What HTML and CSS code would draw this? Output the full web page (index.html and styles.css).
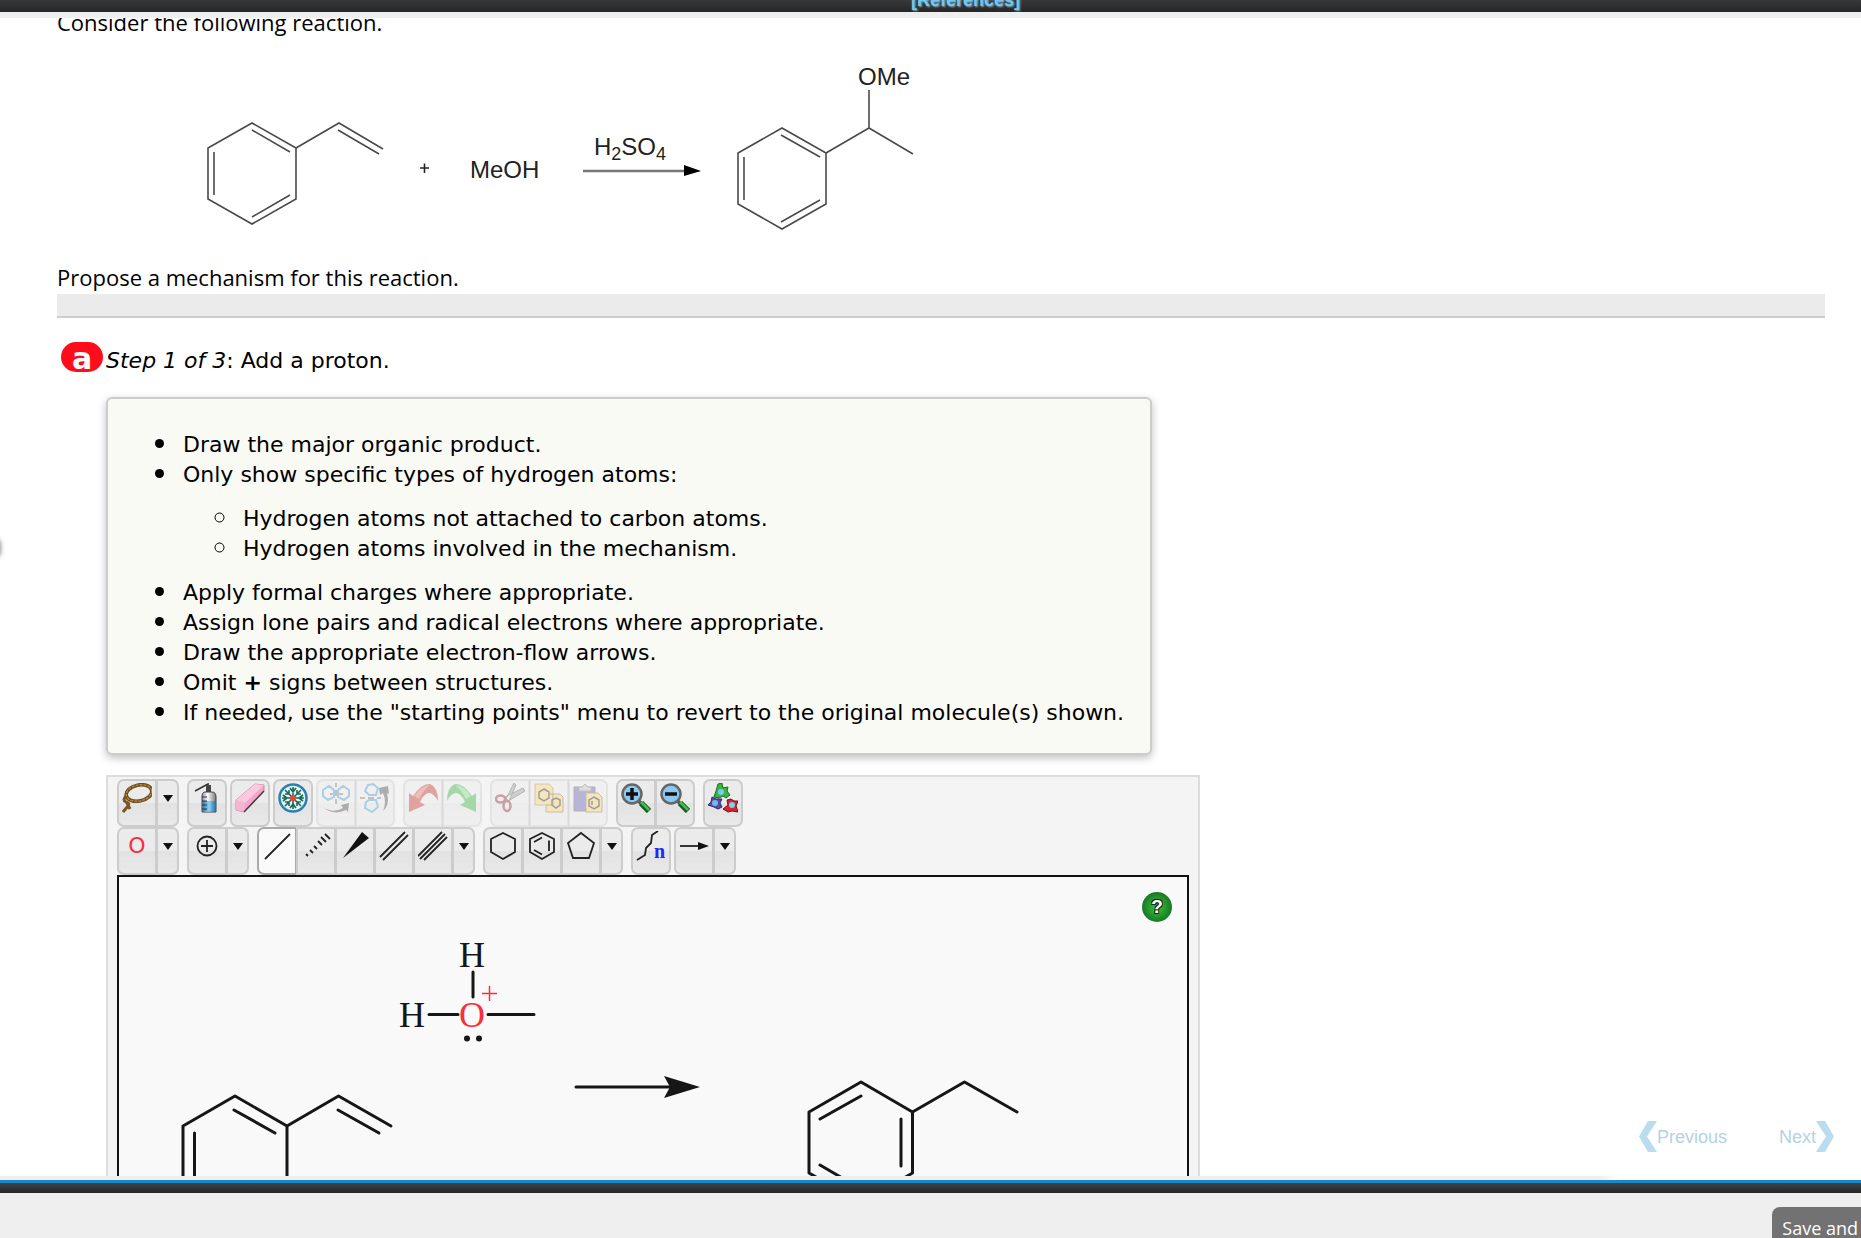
FILE: index.html
```
<!DOCTYPE html>
<html lang="en">
<head>
  <meta charset="UTF-8" />
  <meta name="viewport" content="width=device-width, initial-scale=1.0" />
  <title>Reaction Mechanism - Step 1 of 3</title>
  <link rel="stylesheet" href="styles.css">
</head>
<body>
  <header class="topbar">
    <a href="#" class="references">[References]</a>
  </header>

  <main class="stage">
    <div class="content">
      <p class="question">Consider the following reaction.</p>

      <!-- styrene + MeOH -> ether -->
      <svg class="reaction" width="960" height="205" viewBox="57 46 960 205" role="img" aria-label="Styrene plus MeOH with H2SO4">
        <g fill="none" stroke="#4a4a4a" stroke-width="1.6">
          <path d="M252 123L296 148V199L252 224L208 199V148ZM252 130L290 152M214 152V195M252 217L290 195"/>
          <path d="M296 148L339 123L383 149M338 130L379 154"/>
          <path d="M782 128L826 153V204L782 229L738 204V153ZM781 135L820 157M744 157V200M781 222L820 200"/>
          <path d="M826 153L869 128L913 154M869 128V90"/>
          <path d="M420 168H429M424.500 163.500V173" stroke="#222"/>
          <path d="M583 171H686" stroke="#777" stroke-width="2.500"/>
        </g>
        <path d="M684 165L701 171L684 176Z" fill="#000"/>
        <g class="formula">
          <text x="470" y="178">MeOH</text>
          <text x="594" y="155">H<tspan class="sub" dy="5">2</tspan><tspan dy="-5">SO</tspan><tspan class="sub" dy="5">4</tspan></text>
          <text x="858" y="85">OMe</text>
        </g>
      </svg>

      <p class="question">Propose a mechanism for this reaction.</p>
      <div class="divider"></div>

      <div class="step">
        <span class="badge">a</span>
        <p class="step-title"><em>Step 1 of 3</em>: Add a proton.</p>
      </div>

      <section class="instructions">
        <ul>
          <li>Draw the major organic product.</li>
          <li>Only show specific types of hydrogen atoms:
            <ul>
              <li>Hydrogen atoms not attached to carbon atoms.</li>
              <li>Hydrogen atoms involved in the mechanism.</li>
            </ul>
          </li>
          <li>Apply formal charges where appropriate.</li>
          <li>Assign lone pairs and radical electrons where appropriate.</li>
          <li>Draw the appropriate electron-flow arrows.</li>
          <li>Omit <b>+</b> signs between structures.</li>
          <li>If needed, use the "starting points" menu to revert to the original molecule(s) shown.</li>
        </ul>
      </section>

      <section class="editor">
        <div class="toolbar">
          <div class="group">
            <button aria-label="Lasso"><svg viewBox="0 0 30 30"><ellipse cx="17" cy="10" rx="13" ry="8" transform="rotate(-12 17 10)" fill="none" stroke="#6d4c1d" stroke-width="3.600"/><ellipse cx="17" cy="10" rx="13" ry="8" transform="rotate(-12 17 10)" fill="none" stroke="#b38a45" stroke-width="1.400" stroke-dasharray="3 1"/><path d="M4 13Q0 17 4 19Q8 20 6 23L1 29M5 20L8 26" fill="none" stroke="#7a5622" stroke-width="3"/></svg></button>
            <button class="caret" aria-label="Lasso options"><svg viewBox="0 0 12 30"><path d="M1 12H11L6 19Z" fill="#111"/></svg></button>
          </div>
          <div class="group">
            <button aria-label="Clean up"><svg viewBox="0 0 30 30"><defs><linearGradient id="bottle"><stop offset="0" stop-color="#8b8f94"/><stop offset=".4" stop-color="#fff"/><stop offset="1" stop-color="#777"/></linearGradient><linearGradient id="water"><stop offset="0" stop-color="#2f7cb0"/><stop offset=".5" stop-color="#8fd0f5"/><stop offset="1" stop-color="#2874a8"/></linearGradient></defs><g transform="translate(6 0)"><path d="M-3 8L10 1V5" fill="none" stroke="#333" stroke-width="1.600"/><path d="M8 2H13V9H8Z" fill="#444"/><path d="M4 14Q4 9 7 9H14Q18 9 18 14V29H4Z" fill="url(#bottle)" stroke="#444"/><path d="M4.500 18H17.500V28.500H4.500Z" fill="url(#water)"/><path d="M4 14H9M4 18H9M4 22H9M4 26H9" stroke="#234"/></g></svg></button>
          </div>
          <div class="group tight">
            <button aria-label="Erase"><svg viewBox="0 0 30 30"><path d="M1 17L20 1L29 2V8L9 29L1 27Z" fill="#f3a6cb" stroke="#b97896" stroke-width=".8"/><path d="M1 17L20 1L29 2L10 20Z" fill="#fbc9e0"/><path d="M1 17L10 20L9 29L1 27Z" fill="#f4b5d0"/><path d="M9 29L29 8" stroke="#4d3540" stroke-width="1.500"/></svg></button>
          </div>
          <div class="group tight">
            <button aria-label="Freeze"><svg viewBox="0 0 30 30"><circle cx="15" cy="15" r="13.500" fill="#e3f4fb" stroke="#2d7fae" stroke-width="2.500"/><path d="M15 4V26M4 15H26M7 7L23 23M23 7L7 23M12 5L15 9L18 5M12 25L15 21L18 25M5 12L9 15L5 18M25 12L21 15L25 18M7 11H11V7M19 7V11H23M7 19H11V23M19 23V19H23" fill="none" stroke="#1b6a50" stroke-width="1.600"/><circle cx="15" cy="15" r="3" fill="#e8453c"/></svg></button>
          </div>
          <div class="group tight">
            <button disabled aria-label="Flip horizontal"><svg viewBox="0 0 30 30"><path d="M2 7L8 3L13 7V14L7 17L2 13ZM28 7L22 3L17 7V14L23 17L28 13Z" fill="none" stroke="#3f97d0" stroke-width="2"/><path d="M15 0V4M15 7V13M15 16V21M9 11H12M18 11H22" stroke="#555" stroke-width="1.500"/><path d="M2 24Q12 31 22 25L20 22L28 20L27 29L25 27Q12 33 2 24Z" fill="#444"/></svg></button>
            <button disabled aria-label="Flip vertical"><svg viewBox="0 0 30 30"><path d="M8 2L13 1L18 5L16 12H9L5 8ZM9 17H16L18 24L12 29L5 25L6 19Z" fill="none" stroke="#3f97d0" stroke-width="2"/><path d="M0 15H5M8 15H14M17 15H21" stroke="#555" stroke-width="1.500"/><path d="M19 5L28 3L29 11L27 10Q30 22 23 28Q27 19 23 10L20 12Z" fill="#444"/></svg></button>
          </div>
          <div class="group">
            <button disabled aria-label="Undo"><svg viewBox="0 0 30 30"><path d="M1 29V10L5 13Q14 0 22 1Q30 4 30 18Q25 9 20 10Q15 12 12 19L17 22Z" fill="#c02a20"/><path d="M6 13Q14 2 22 2Q17 5 11 16Z" fill="#e2705f"/></svg></button>
            <button disabled aria-label="Redo"><svg viewBox="0 0 30 30"><path d="M29 29V10L25 13Q16 0 8 1Q0 4 0 18Q5 9 10 10Q15 12 18 19L13 22Z" fill="#2fb03c"/><path d="M24 13Q16 2 8 2Q13 5 19 16Z" fill="#7edb7f"/></svg></button>
          </div>
          <div class="group">
            <button disabled aria-label="Cut"><svg viewBox="0 0 30 30"><path d="M19 0L21 2L14 18L11 16ZM30 8L28 5L10 14L13 18Z" fill="#999" stroke="#555"/><ellipse cx="5.500" cy="16" rx="4.500" ry="3.500" fill="none" stroke="#8e2430" stroke-width="2.500"/><ellipse cx="12" cy="23" rx="3.500" ry="5" fill="none" stroke="#8e2430" stroke-width="2.500"/></svg></button>
            <button disabled aria-label="Copy"><svg viewBox="0 0 30 30"><path d="M1 1H15L19 5V22H1Z" fill="#f6d372" stroke="#a8853a"/><path d="M10 6L15 9V15L10 18L5 15V9Z" fill="none" stroke="#222" stroke-width="1.500"/><path d="M15 11H26L29 14V29H12V22H19V11Z" fill="#f6cf65" stroke="#8a6a2a"/><path d="M22 15L26 17V22L22 25L18 22V17Z" fill="none" stroke="#222" stroke-width="1.500"/></svg></button>
            <button disabled aria-label="Paste"><svg viewBox="0 0 30 30"><path d="M1 4H22V28H1Z" fill="#5c55ad" stroke="#555"/><path d="M6 4H9L12 1L15 4H18V8H6Z" fill="#bbb" stroke="#777"/><path d="M13 10H25L29 14V29H13Z" fill="#f6cf65" stroke="#8a6a2a"/><path d="M21 14L26 17V23L21 26L16 23V17ZM19 18V22" fill="none" stroke="#222" stroke-width="1.500"/></svg></button>
          </div>
          <div class="group">
            <button aria-label="Zoom in"><svg viewBox="0 0 30 30"><path d="M16 17L20 20" stroke="#555" stroke-width="4"/><path d="M20 20L28 28" stroke="#145c1f" stroke-width="6"/><path d="M20 19L28 27" stroke="#48bd55" stroke-width="2.500"/><circle cx="11" cy="11" r="9.500" fill="#8bc9f2" stroke="#666" stroke-width="2.500"/><path d="M11 5V17M5 11H17" stroke="#111" stroke-width="3.500"/></svg></button>
            <button aria-label="Zoom out"><svg viewBox="0 0 30 30"><path d="M16 17L20 20" stroke="#555" stroke-width="4"/><path d="M20 20L28 28" stroke="#145c1f" stroke-width="6"/><path d="M20 19L28 27" stroke="#48bd55" stroke-width="2.500"/><circle cx="11" cy="11" r="9.500" fill="#8bc9f2" stroke="#666" stroke-width="2.500"/><path d="M5 11H17" stroke="#111" stroke-width="3.500"/></svg></button>
          </div>
          <div class="group">
            <button aria-label="Templates"><svg viewBox="0 0 30 30"><path d="M10 1L14 0L15 5L20 4L19 8L22 12L18 15L15 13L11 15L6 14L8 8Z" fill="#3fb043" stroke="#1d6a2c"/><path d="M4 14L8 16L14 16L12 20L14 24L10 26L6 24L0 22L3 19Z" fill="#5a4aa8" stroke="#32286e"/><path d="M19 17L23 16L26 18L30 18L28 23L30 29L24 28L20 29L15 26L20 22Z" fill="#d4242f" stroke="#7c1018"/><circle cx="13" cy="9" r="3" fill="#6fd0ea"/><circle cx="7" cy="20" r="3" fill="#74b8ee"/><circle cx="24" cy="22" r="3" fill="#7fcdf0"/></svg></button>
          </div>
        </div>

        <div class="toolbar">
          <div class="group">
            <button class="atom">O</button>
            <button class="caret" aria-label="Atom options"><svg viewBox="0 0 12 30"><path d="M1 12H11L6 19Z" fill="#111"/></svg></button>
          </div>
          <div class="group">
            <button aria-label="Positive charge"><svg viewBox="0 0 30 30"><circle cx="15" cy="15" r="9.500" fill="none" stroke="#222" stroke-width="1.800"/><path d="M15 9V21M9 15H21" stroke="#222" stroke-width="1.800"/></svg></button>
            <button class="caret" aria-label="Charge options"><svg viewBox="0 0 12 30"><path d="M1 12H11L6 19Z" fill="#111"/></svg></button>
          </div>
          <div class="group">
            <button class="active" aria-label="Single bond"><svg viewBox="0 0 30 30"><path d="M3 28L28 3" stroke="#222" stroke-width="1.800"/></svg></button>
            <button aria-label="Hashed bond"><svg viewBox="0 0 30 30"><path d="M5 23L7 25M9 19L12 22M13 15L16 18M17 10L21 14M20 6L25 11M24 3L29 8" stroke="#222" stroke-width="1.800"/></svg></button>
            <button aria-label="Wedge bond"><svg viewBox="0 0 30 30"><path d="M3 27L22 1L29 7Z" fill="#111"/></svg></button>
            <button aria-label="Double bond"><svg viewBox="0 0 30 30"><path d="M1 26L26 1M4 29L29 4" stroke="#222" stroke-width="1.800"/></svg></button>
            <button aria-label="Triple bond"><svg viewBox="0 0 30 30"><path d="M0 25L24 1M2 28L27 3M6 29L29 6" stroke="#222" stroke-width="1.800"/></svg></button>
            <button class="caret" aria-label="Bond options"><svg viewBox="0 0 12 30"><path d="M1 12H11L6 19Z" fill="#111"/></svg></button>
          </div>
          <div class="group">
            <button aria-label="Cyclohexane"><svg viewBox="0 0 30 30"><path d="M15 2L27 8V21L15 28L3 21V8Z" fill="none" stroke="#222" stroke-width="1.800"/></svg></button>
            <button aria-label="Benzene"><svg viewBox="0 0 30 30"><path d="M15 2L27 8V21L15 28L3 21V8ZM7 11L15 6.500M22 9.500V20M7 19L15 23.500" fill="none" stroke="#222" stroke-width="1.800"/></svg></button>
            <button aria-label="Cyclopentane"><svg viewBox="0 0 30 30"><path d="M15 2L28 12L23 27H7L2 12Z" fill="none" stroke="#222" stroke-width="1.800"/></svg></button>
            <button class="caret" aria-label="Ring options"><svg viewBox="0 0 12 30"><path d="M1 12H11L6 19Z" fill="#111"/></svg></button>
          </div>
          <div class="group">
            <button aria-label="Chain"><svg viewBox="0 0 30 30"><path d="M22 0L16 4L15 12L10 17L9 24L1 29" fill="none" stroke="#222" stroke-width="1.800"/><text x="18" y="27" class="chain-n">n</text></svg></button>
          </div>
          <div class="group tight">
            <button aria-label="Arrow"><svg viewBox="0 0 30 30"><path d="M1 15H20" stroke="#222" stroke-width="1.800"/><path d="M19 11L30 15L19 19Z" fill="#111"/></svg></button>
            <button class="caret" aria-label="Arrow options"><svg viewBox="0 0 12 30"><path d="M1 12H11L6 19Z" fill="#111"/></svg></button>
          </div>
        </div>

        <div class="canvas">
          <svg width="1068" height="400" viewBox="119 877 1068 400" role="img" aria-label="Drawing area">
            <g fill="none" stroke="#161616" stroke-width="3" stroke-linecap="round" stroke-linejoin="round">
              <path d="M473 972V997M429 1014.500H458M488 1014.500H534"/>
              <path d="M235 1096L287 1126V1186L235 1216L183 1186V1126ZM234 1110L275 1133M194.500 1133V1180"/>
              <path d="M287 1126L338.500 1096L391 1126M338 1110L379 1133"/>
              <path d="M576 1087H670"/>
              <path d="M861 1082L912.500 1112V1173L861 1203L809 1173V1112ZM861 1096L820 1119M901 1119V1166M820 1165L861 1189"/>
              <path d="M912.500 1112L964.500 1082L1017 1112"/>
            </g>
            <path d="M664 1076L700 1087L664 1098L670 1087Z" fill="#161616"/>
            <circle cx="467" cy="1038.500" r="3" fill="#161616"/>
            <circle cx="479" cy="1038.500" r="3" fill="#161616"/>
            <path d="M482 993.500H497M489.500 986V1001" stroke="#f92f3c" stroke-width="1.500"/>
            <g class="atoms">
              <text x="472" y="967">H</text>
              <text x="412" y="1027">H</text>
              <text x="472" y="1027" class="oxygen">O</text>
            </g>
          </svg>
          <button class="help" aria-label="Help">?</button>
        </div>
      </section>
    </div>

    <nav class="pager">
      <a href="#"><svg width="18" height="31" viewBox="0 0 18 31"><path d="M9 0H18L8 15.500L18 31H9L0 15.500Z"/></svg>Previous</a>
      <a href="#">Next<svg width="18" height="31" viewBox="0 0 18 31"><path d="M9 0H0L10 15.500L0 31H9L18 15.500Z"/></svg></a>
    </nav>
  </main>
  <div class="edge"></div>

  <footer class="footer">
    <button class="save">Save and</button>
  </footer>
</body>
</html>
```
FILE: styles.css
```
* {
  box-sizing: border-box;
}
body {
  margin: 0;
  height: 100vh;
  display: flex;
  flex-direction: column;
  overflow: hidden;
  background: #fff;
  color: #000;
}
.topbar {
  height: 12px;
  flex: none;
  display: flex;
  justify-content: center;
  align-items: flex-end;
  padding: 0 0 2px 70px;
  overflow: hidden;
  background: linear-gradient(#36383a, #252627);
}
.references {
  font: bold 18px/20px "Liberation Sans", Arial, sans-serif;
  color: #6cc9f2;
  text-decoration: none;
  text-shadow: 1px 1px 2px #9ab;
}
.stage {
  flex: 1;
  min-height: 0;
  position: relative;
  overflow: hidden;
  border-top: 6px solid #efefef;
}
/* shadow of the collapsed side panel */
.stage::before {
  content: "";
  position: absolute;
  left: -10px;
  top: 45%;
  width: 10px;
  height: 18px;
  border-radius: 5px;
  box-shadow: 0 0 5px rgba(0, 0, 0, 0.6);
}
.edge {
  flex: none;
  height: 4px;
  background: linear-gradient(to right, #efefef 86%, #fff 87%);
}
.content {
  height: 100%;
  overflow: hidden;
  padding: 0 36px 0 57px;
}
.question {
  margin: 0;
  font: 22px/28px "Open Sans", "Noto Sans", sans-serif;
}
.question:first-child {
  margin-top: -10px;
}
.reaction {
  display: block;
  margin: 10px 0 12px;
}
.formula {
  font: 24px "Liberation Sans", Arial, sans-serif;
  fill: #222;
}
.sub {
  font-size: 18px;
}
.divider {
  height: 24px;
  margin-top: 3px;
  background: #ebebeb;
  border-bottom: 2px solid #ccc;
}
.step {
  display: flex;
  align-items: flex-start;
  gap: 3px;
  margin: 24px 0 21px 4px;
}
.badge {
  width: 42px;
  height: 30px;
  border-radius: 15px;
  background: #ff0d1b;
  color: #fff;
  font: bold 30px/34px "DejaVu Sans", Verdana, sans-serif;
  text-align: center;
  overflow: hidden;
}
.step-title {
  margin: 0;
  padding-top: 4px;
  font: 22px/30px "DejaVu Sans", Verdana, sans-serif;
}
.instructions {
  width: fit-content;
  margin-left: 49px;
  padding: 30px 26px 26px 0;
  border: 2px solid #ccc;
  border-radius: 6px;
  background: #f9faf4;
  box-shadow: 0 3px 8px rgba(0, 0, 0, 0.25);
  font: 22px/28px "DejaVu Sans", Verdana, sans-serif;
}
.instructions ul {
  margin: 0;
  padding-left: 71px;
}
.instructions ul ul {
  margin: 14px 0;
  padding-left: 56px;
}
.instructions li {
  padding-left: 4px;
}
/* the larger bullet opens each line to 30px */
.instructions li::marker {
  font-size: 28px;
}
.editor {
  width: 1094px;
  margin: 20px 0 0 49px;
  padding: 2px 9px;
  border: 2px solid #ddd;
  background: #f4f4f4;
}
.toolbar {
  display: flex;
  gap: 8px;
  height: 48px;
}
.group {
  display: flex;
}
.group.tight {
  margin-left: -5px;
}
.group button {
  width: 40px;
  height: 48px;
  padding: 0 3px 10px;
  border: 2px solid #ccc;
  background: linear-gradient(#ebebeb 50%, #e2e2e2 50%, #e9e9e9);
}
.group button + button {
  margin-left: -1px;
}
.group button:first-child {
  border-top-left-radius: 7px;
  border-bottom-left-radius: 7px;
}
.group button:last-child {
  border-top-right-radius: 7px;
  border-bottom-right-radius: 7px;
}
.group button svg {
  display: block;
  width: 30px;
  height: 30px;
}
.group button.caret {
  width: 23px;
  padding: 0 4px 10px;
}
.group button.caret svg {
  width: 12px;
}
.group button:disabled {
  opacity: 0.4;
}
.group button.active {
  background: #fafafa;
  border-color: #aaa;
}
.group button.atom {
  font: 22px/30px "DejaVu Sans", Verdana, sans-serif;
  color: #f92f3c;
}
.chain-n {
  font: bold 20px "Liberation Serif", "Times New Roman", serif;
  fill: #2424ff;
}
.canvas {
  position: relative;
  border: 2px solid #111;
  background: #f9f9f9;
}
.canvas svg {
  display: block;
}
.atoms {
  font: 36px "Liberation Serif", "Times New Roman", serif;
  fill: #161616;
  text-anchor: middle;
}
.atoms .oxygen {
  fill: #f92f3c;
}
.help {
  position: absolute;
  top: 15px;
  right: 15px;
  width: 30px;
  height: 30px;
  padding: 0;
  border: none;
  border-radius: 50%;
  background: radial-gradient(#2fd032, #1c7d28 65%);
  color: #fff;
  font: bold 19px/30px "Liberation Sans", Arial, sans-serif;
  text-shadow: -1px -1px #222, 1px -1px #222, -1px 1px #222, 1px 1px #222;
}
/* floats over the scrolled content */
.pager {
  position: absolute;
  right: 27px;
  bottom: 24px;
  display: flex;
  gap: 52px;
}
.pager a {
  display: flex;
  align-items: center;
  font: 18px/26px "Liberation Sans", Arial, sans-serif;
  color: #b3d2e4;
  text-decoration: none;
}
.pager svg {
  fill: #b9dcee;
}
.footer {
  flex: none;
  height: 58px;
  display: flex;
  justify-content: flex-end;
  border-top: 3px solid #1889c8;
  background: linear-gradient(#414344, #252627) top / 100% 10px no-repeat #efefef;
  overflow: hidden;
}
.save {
  height: 50px;
  margin-top: 24px;
  padding: 0 3px 8px 10px;
  border: none;
  border-radius: 8px 0 0 0;
  background: #727272;
  color: #fff;
  font: 18px/24px "Open Sans", "Noto Sans", sans-serif;
}
```
